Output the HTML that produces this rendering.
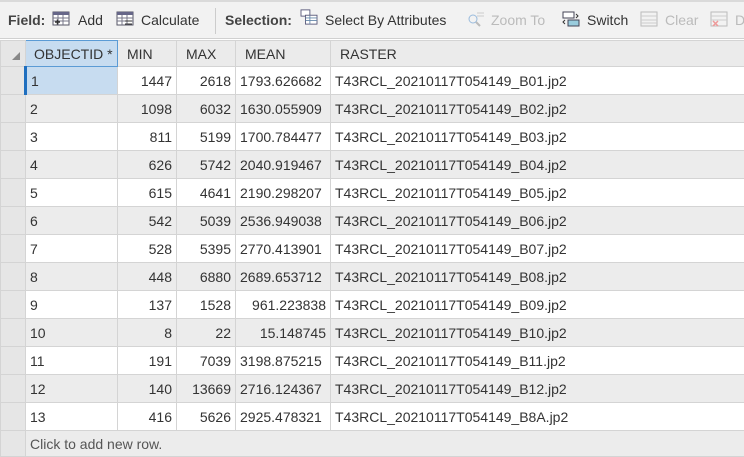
<!DOCTYPE html>
<html><head><style>
body{margin:0;width:744px;height:456px;overflow:hidden;background:#fff;font-family:"Liberation Sans",sans-serif;font-size:14px;color:#333}
.tb{position:absolute;left:0;top:0;width:744px;height:39px;background:#f2f2f2;border-top:2px solid #dadada;box-sizing:border-box;border-bottom:1px solid #d0d0d0}
.tb span{position:absolute;top:10px;white-space:nowrap}
.b{font-weight:bold;color:#444}
.dis{color:#bbb}
.ic{position:absolute;top:9px;width:18px;height:16px}
table{position:absolute;left:0;top:40px;border-collapse:collapse;table-layout:fixed;width:744px}
tr{height:28px}
td{height:28px;border:1px solid #d4d4d4;padding:0 4px;white-space:nowrap;overflow:hidden;box-sizing:border-box;line-height:16px}
tr.h{height:26px}
tr.h td{background:#ebebeb;height:26px;padding-left:9px}
tr.e td{background:#ececec}
tr.l{height:26px}
tr.l td{height:26px}
td.g{background:#e6e6e6!important;border-color:#d4d4d4}
td.r{text-align:right}
</style></head><body>
<div class="tb">
<span class="b" style="left:8px">Field:</span>
<svg class="ic" style="left:52px" viewBox="0 0 18 16"><rect x="1" y="1" width="16" height="13" fill="#fff" stroke="#556"/><rect x="1" y="1" width="16" height="3" fill="#668"/><path d="M1 7h16M1 10h16M6 4v10M11 4v10" stroke="#778"/><path d="M3 11h5M5.5 8.5v5" stroke="#333" stroke-width="1.5"/></svg>
<span style="left:78px">Add</span>
<svg class="ic" style="left:116px" viewBox="0 0 18 16"><rect x="1" y="1" width="16" height="13" fill="#fff" stroke="#556"/><rect x="1" y="1" width="16" height="3" fill="#668"/><path d="M1 7h16M1 10h16M6 4v10M11 4v10" stroke="#778"/><path d="M9 10h7M9 13h7" stroke="#333"/></svg>
<span style="left:141px">Calculate</span>
<div style="position:absolute;left:215px;top:6px;width:1px;height:26px;background:#ccc"></div>
<span class="b" style="left:225px">Selection:</span>
<svg class="ic" style="left:300px;top:7px" viewBox="0 0 20 18"><rect x="1" y="1" width="10" height="7" fill="#fff" stroke="#557"/><rect x="6" y="7" width="13" height="10" fill="#fff" stroke="#557"/><path d="M6 10h13M6 13h13M11 7v10" stroke="#68a"/></svg>
<span style="left:325px">Select By Attributes</span>
<svg class="ic" style="left:467px" viewBox="0 0 18 16"><circle cx="6" cy="8" r="4" fill="none" stroke="#9bd"/><path d="M9 11l4 4" stroke="#bbb" stroke-width="2"/><path d="M10 2h7M10 5h7" stroke="#ccc"/></svg>
<span class="dis" style="left:491px">Zoom To</span>
<svg class="ic" style="left:562px" viewBox="0 0 18 16"><rect x="1" y="1" width="11" height="6" fill="#fff" stroke="#445"/><rect x="6" y="9" width="11" height="6" fill="#9cd" stroke="#445"/><path d="M14 3l2 2-2 2M3 13l-2-2 2-2" stroke="#333" fill="none"/></svg>
<span style="left:587px">Switch</span>
<svg class="ic" style="left:640px" viewBox="0 0 18 16"><rect x="1" y="1" width="16" height="14" fill="none" stroke="#bbb"/><path d="M1 5h16M1 9h16M1 12h16" stroke="#ccc"/></svg>
<span class="dis" style="left:665px">Clear</span>
<svg class="ic" style="left:710px" viewBox="0 0 18 16"><rect x="1" y="1" width="16" height="14" fill="none" stroke="#bbb"/><path d="M1 5h16M1 9h16" stroke="#ccc"/><path d="M3 10l5 5M8 10l-5 5" stroke="#e99" stroke-width="1.5"/></svg>
<span class="dis" style="left:735px">D</span>
</div>
<table>
<colgroup><col style="width:25px"><col style="width:92px"><col style="width:59px"><col style="width:59px"><col style="width:95px"><col style="width:414px"></colgroup>
<tr class="h"><td class="g"><svg width="12" height="12" style="margin-top:6px"><path d="M10 3v8H2z" fill="#888"/></svg></td><td style="background:#c7dcf0;border:1px solid #5b9bd5;padding-left:8px">OBJECTID *</td><td>MIN</td><td>MAX</td><td>MEAN</td><td>RASTER</td></tr>
<tr><td class="g"></td><td style="background:#c7dcf0;border-left:3px solid #1f6fbf">1</td><td class="r">1447</td><td class="r">2618</td><td>1793.626682</td><td>T43RCL_20210117T054149_B01.jp2</td></tr>
<tr class="e"><td class="g"></td><td>2</td><td class="r">1098</td><td class="r">6032</td><td>1630.055909</td><td>T43RCL_20210117T054149_B02.jp2</td></tr>
<tr><td class="g"></td><td>3</td><td class="r">811</td><td class="r">5199</td><td>1700.784477</td><td>T43RCL_20210117T054149_B03.jp2</td></tr>
<tr class="e"><td class="g"></td><td>4</td><td class="r">626</td><td class="r">5742</td><td>2040.919467</td><td>T43RCL_20210117T054149_B04.jp2</td></tr>
<tr><td class="g"></td><td>5</td><td class="r">615</td><td class="r">4641</td><td>2190.298207</td><td>T43RCL_20210117T054149_B05.jp2</td></tr>
<tr class="e"><td class="g"></td><td>6</td><td class="r">542</td><td class="r">5039</td><td>2536.949038</td><td>T43RCL_20210117T054149_B06.jp2</td></tr>
<tr><td class="g"></td><td>7</td><td class="r">528</td><td class="r">5395</td><td>2770.413901</td><td>T43RCL_20210117T054149_B07.jp2</td></tr>
<tr class="e"><td class="g"></td><td>8</td><td class="r">448</td><td class="r">6880</td><td>2689.653712</td><td>T43RCL_20210117T054149_B08.jp2</td></tr>
<tr><td class="g"></td><td>9</td><td class="r">137</td><td class="r">1528</td><td class="r">961.223838</td><td>T43RCL_20210117T054149_B09.jp2</td></tr>
<tr class="e"><td class="g"></td><td>10</td><td class="r">8</td><td class="r">22</td><td class="r">15.148745</td><td>T43RCL_20210117T054149_B10.jp2</td></tr>
<tr><td class="g"></td><td>11</td><td class="r">191</td><td class="r">7039</td><td>3198.875215</td><td>T43RCL_20210117T054149_B11.jp2</td></tr>
<tr class="e"><td class="g"></td><td>12</td><td class="r">140</td><td class="r">13669</td><td>2716.124367</td><td>T43RCL_20210117T054149_B12.jp2</td></tr>
<tr><td class="g"></td><td>13</td><td class="r">416</td><td class="r">5626</td><td>2925.478321</td><td>T43RCL_20210117T054149_B8A.jp2</td></tr>
<tr class="e l"><td class="g"></td><td colspan="5" style="color:#555">Click to add new row.</td></tr>
</table>
</body></html>
